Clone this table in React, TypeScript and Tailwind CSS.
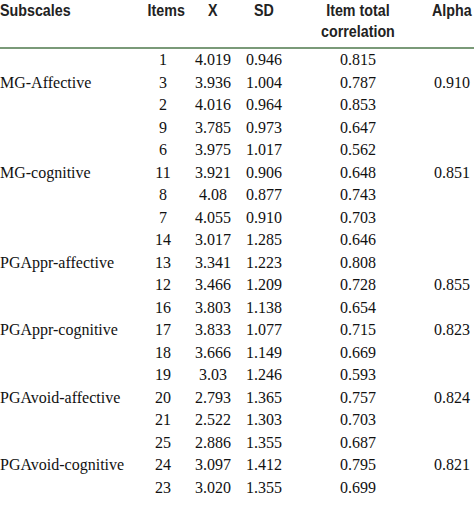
const rows: [string, string, string, string, string, string][] = [
  ['', '1', '4.019', '0.946', '0.815', ''],
  ['MG-Affective', '3', '3.936', '1.004', '0.787', '0.910'],
  ['', '2', '4.016', '0.964', '0.853', ''],
  ['', '9', '3.785', '0.973', '0.647', ''],
  ['', '6', '3.975', '1.017', '0.562', ''],
  ['MG-cognitive', '11', '3.921', '0.906', '0.648', '0.851'],
  ['', '8', '4.08', '0.877', '0.743', ''],
  ['', '7', '4.055', '0.910', '0.703', ''],
  ['', '14', '3.017', '1.285', '0.646', ''],
  ['PGAppr-affective', '13', '3.341', '1.223', '0.808', ''],
  ['', '12', '3.466', '1.209', '0.728', '0.855'],
  ['', '16', '3.803', '1.138', '0.654', ''],
  ['PGAppr-cognitive', '17', '3.833', '1.077', '0.715', '0.823'],
  ['', '18', '3.666', '1.149', '0.669', ''],
  ['', '19', '3.03', '1.246', '0.593', ''],
  ['PGAvoid-affective', '20', '2.793', '1.365', '0.757', '0.824'],
  ['', '21', '2.522', '1.303', '0.703', ''],
  ['', '25', '2.886', '1.355', '0.687', ''],
  ['PGAvoid-cognitive', '24', '3.097', '1.412', '0.795', '0.821'],
  ['', '23', '3.020', '1.355', '0.699', ''],
];

const cols = 'grid grid-cols-[144px_38px_62px_40px_148px_42px]';

// condensed bold heading, squeezed horizontally
function Head({ children, origin = 'origin-center' }: { children: React.ReactNode; origin?: string }) {
  return <span className={`inline-block scale-x-[0.84] ${origin}`}>{children}</span>;
}

export default function App() {
  return (
    <div className="w-[474px] h-[506px] overflow-hidden bg-white text-[#111]">
      {/* Header */}
      <div
        className={`${cols} h-[47px] text-[17px] leading-[21px] font-bold text-[#222]`}
        style={{ fontFamily: '"Liberation Sans", Arial, sans-serif' }}
      >
        <div className="whitespace-nowrap">
          <Head origin="origin-left">Subscales</Head>
        </div>
        <div className="text-center whitespace-nowrap">
          <Head>Items</Head>
        </div>
        <div className="text-center">
          <Head>X</Head>
        </div>
        <div className="text-center">
          <Head>SD</Head>
        </div>
        <div className="text-center whitespace-nowrap">
          <Head>
            Item total
            <br />
            correlation
          </Head>
        </div>
        <div className="whitespace-nowrap">
          <Head origin="origin-left">Alpha</Head>
        </div>
      </div>
      <div className="h-[2px] bg-[#7a9a78]" />

      {/* Body */}
      <div className="text-[16px] leading-[22.5px]" style={{ fontFamily: '"Liberation Serif", "Times New Roman", serif' }}>
        {rows.map((r, i) => (
          <div key={i} className={cols}>
            <div className="whitespace-nowrap">{r[0]}</div>
            <div className="text-center">{r[1]}</div>
            <div className="text-center">{r[2]}</div>
            <div className="text-center">{r[3]}</div>
            <div className="text-center">{r[4]}</div>
            <div className="pl-[2px]">{r[5]}</div>
          </div>
        ))}
      </div>
    </div>
  );
}
